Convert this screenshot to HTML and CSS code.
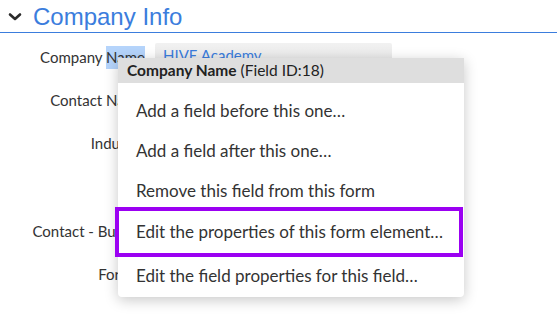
FILE: index.html
```html
<!DOCTYPE html>
<html lang="en">
<head>
    <meta charset="UTF-8">
    <meta name="viewport" content="width=device-width, initial-scale=1.0">
    <title>Company Info</title>
    <link rel="stylesheet" href="styles.css">
</head>
<body>
    <div class="section">
        <!-- Section header -->
        <div class="section-head">
            <svg class="chevron" width="14" height="10" viewBox="0 0 14 10">
                <path d="M2 2.5 L7 7 L12 2.5" fill="none" stroke="#2b2b2b" stroke-width="2.6" stroke-linecap="round" stroke-linejoin="round"/>
            </svg>
            <h2>Company Info</h2>
        </div>

        <!-- Form fields -->
        <div class="fields">
            <div class="row">
                <label>Company <span class="sel">Name</span></label>
                <div class="input"><span class="value">HIVE Academy</span></div>
            </div>
            <div class="row">
                <label>Contact Name</label>
                <div class="input"></div>
            </div>
            <div class="row row-tall">
                <label>Industry</label>
                <div class="input input-tall"></div>
            </div>
            <div class="row">
                <label>Contact - Budget</label>
                <div class="input"></div>
            </div>
            <div class="row">
                <label>Format</label>
                <div class="input"></div>
            </div>
        </div>
    </div>

    <!-- Context menu -->
    <div class="menu">
        <div class="menu-head"><b>Company Name</b> (Field ID:18)</div>
        <ul class="menu-list">
            <li>Add a field before this one…</li>
            <li>Add a field after this one…</li>
            <li>Remove this field from this form</li>
            <li class="picked">Edit the properties of this form element…</li>
            <li class="last">Edit the field properties for this field…</li>
        </ul>
    </div>
</body>
</html>
```

FILE: styles.css
```css
body { margin: 0; background: #fff; font-family: Lato, "Open Sans", sans-serif; color: #333; position: relative; height: 317px; overflow: hidden; }
.section-head { display: flex; align-items: center; height: 32px; border-bottom: 1px solid #3b7ddd; padding-left: 8px; }
.chevron { margin-right: 11px; margin-top: 2px; }
h2 { margin: 0; font-family: "Liberation Sans", Arial, sans-serif; font-weight: normal; font-size: 24px; color: #3b7ddd; line-height: 28px; margin-top: 2px; }
.fields { padding-top: 10px; }
.row { display: grid; grid-template-columns: 145px 237px; column-gap: 10px; height: 43px; }
.row-tall { height: 88px; }
label { text-align: right; font-size: 15px; line-height: 28px; color: #333; white-space: nowrap; }
.sel { background: #b5d4fb; padding: 2px 0 3px; }
.input { height: 28px; background: linear-gradient(#f1f1f1, #e6e6e6); border-radius: 2px; padding-left: 8px; }
.input-tall { height: 70px; }
.value { font-size: 15px; line-height: 24px; color: #3b7ddd; }
.menu { position: absolute; left: 118px; top: 58px; width: 346px; background: #fff; border-radius: 0 0 4px 4px; box-shadow: 0 3px 14px rgba(0, 0, 0, 0.22); }
.menu-head { background: #dedede; height: 25px; line-height: 25px; padding-left: 9px; font-size: 15.5px; color: #222; }
.menu-head b { font-weight: bold; }
.menu-list { list-style: none; margin: 0; padding: 8px 0 2px; }
.menu-list li { height: 40px; line-height: 40px; padding-left: 18px; font-size: 17px; color: #333; white-space: nowrap; }
.menu-list li.picked { height: 42px; line-height: 42px; margin: -4px 1px 0 -3px; padding-left: 17px; border: 4px solid #9b00f2; }
.menu-list li.last { height: 38px; line-height: 38px; }
```
